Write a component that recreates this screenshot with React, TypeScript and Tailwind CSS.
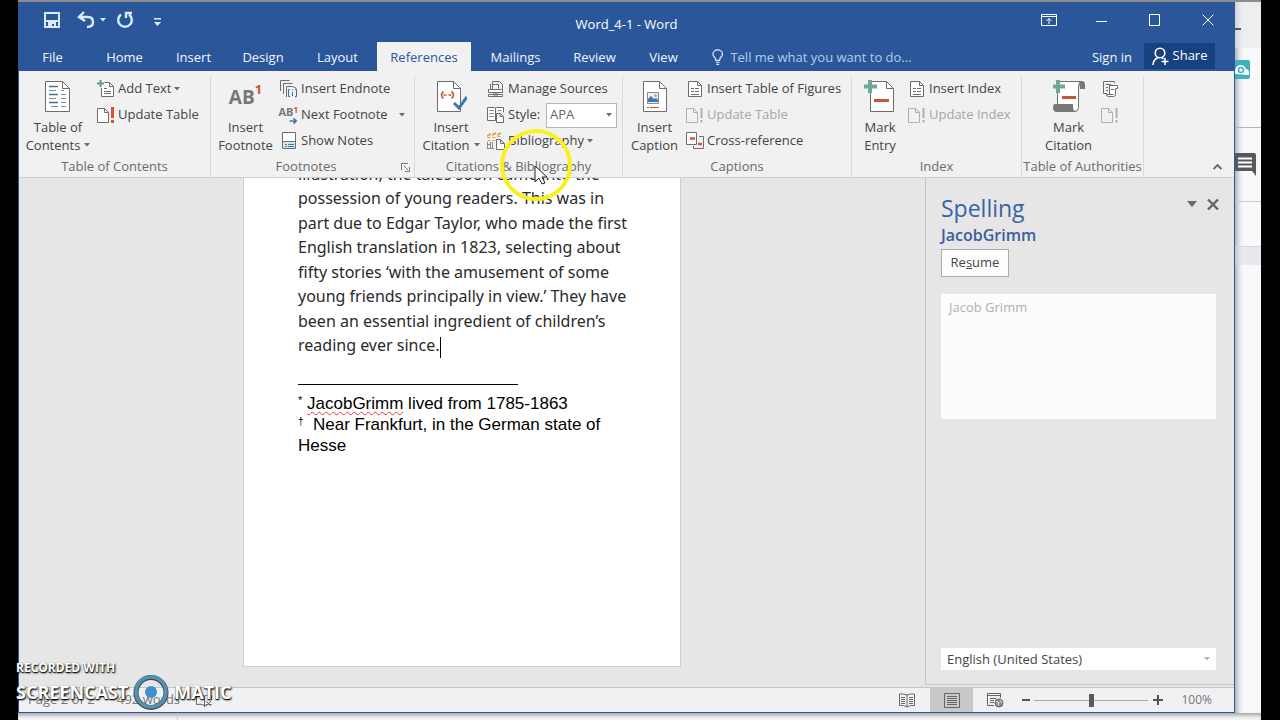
import type { ReactNode } from "react";

type IconProps = { children: ReactNode; big?: boolean };

function Icon({ children, big }: IconProps) {
  return big ? (
    <svg width="32" height="34" viewBox="0 0 32 34" fill="none" stroke="#6d6d6d" className="shrink-0">
      {children}
    </svg>
  ) : (
    <svg width="18" height="18" viewBox="0 0 18 18" fill="none" stroke="#6d6d6d" className="shrink-0">
      {children}
    </svg>
  );
}

function Caret({ className = "fill-[#6a6a6a]" }: { className?: string }) {
  return (
    <svg width="6" height="4" viewBox="0 0 6 4" className={`shrink-0 ${className}`}>
      <path d="M0 0h6L3 3.5z" />
    </svg>
  );
}

const tocIcon = (
  <Icon big>
    <path d="M3.5 1.5h17l7 7v23h-24z" fill="#fff" />
    <path d="M20.500 1.500v7h7" />
    <path d="M7 6.500h9M7 14.500h9M7 22.500h9" stroke="#41719c" strokeWidth="1.500" />
    <path d="M7 10.500h7M7 18.500h7M9 26.500h7M19 14.500h5M19 18.500h5M19 22.500h5M19 26.500h5M19 10.500h3" stroke="#8a8a8a" />
  </Icon>
);

const addTextIcon = (
  <Icon>
    <path d="M4.500 8v8.500h12v-10l-4-4h-5" fill="#fff" />
    <path d="M12.500 2.500v4h4M7 8.500h3M7 11.500h7M7 13.500h7" />
    <path d="M3.500 0v7M0 3.500h7" stroke="#58a283" strokeWidth="2" />
  </Icon>
);

const updateIcon = (
  <Icon>
    <path d="M.5 2.500h7l4 4v10H.5z" fill="#fff" />
    <path d="M7.500 2.500v4h4" />
    <path d="M15.500 1v11M15.500 14v3" stroke="#d9532f" strokeWidth="3" />
  </Icon>
);

const updateIconOff = (
  <Icon>
    <g stroke="#b0b0b0">
      <path d="M.5 2.500h7l4 4v10H.5z" />
      <path d="M7.500 2.500v4h4" />
      <path d="M15.500 2v10M15.500 14v2.500" strokeWidth="2" />
    </g>
  </Icon>
);

const endnoteIcon = (
  <Icon>
    <path d="M.5 11V.5h9M3.500 14V3.500h9M6.500 17V6.500h6l4 2" fill="none" />
    <path d="M10 9.500H8.500v7H10M15 9.500h1.500v7H15M12.500 12v4M12.500 9.500v1" stroke="#3d6f9e" />
  </Icon>
);

const showNotesIcon = (
  <Icon>
    <path d="M2.500.5h13v16h-13z" fill="#fff" />
    <path d="M3 9h12v7H3z" fill="#d3e4ec" stroke="none" />
    <path d="M2.500 9.500h13M5 12.500h2M8 12.500h6M5 14.500h2M8 14.500h6" stroke="#4f8099" />
  </Icon>
);

const citationIcon = (
  <Icon big>
    <path d="M2.500 1.500h16l7 7v23h-23z" fill="#fff" />
    <path d="M18.500 1.500v7h7" />
    <path d="M8.500 11.500q-4 3.500 0 7M16.500 11.500q4 3.500 0 7M8.500 15h3M13.500 15h3" stroke="#d0593a" strokeWidth="1.700" />
    <path d="M19 23l5 5 8-11" stroke="#3f77b5" strokeWidth="3" />
  </Icon>
);

const manageIcon = (
  <Icon>
    <path d="M5.500 9V1.500h7l3 3V9M3.500 9V4M5.500 4.500h6v4" />
    <path d="M1.500 9.500h14v3h-14zM1.500 14.500h14v2h-14z" fill="#fff" />
    <path d="M6 14.500h5" strokeWidth="2" />
  </Icon>
);

const styleIcon = (
  <Icon>
    <path d="M.5 1.500h7q1 0 1 1v12h-8zM8.500 2.500q0-1 1-1h7v5" fill="#fff" />
    <path d="M2 4.500h5M2 7.500h5M2 10.500h5M10.500 4.500h4" stroke="#6a9ab0" />
    <path d="M9.500 7.500h4l3 3v6h-7zM13 7.500v3h3" fill="#fff" />
  </Icon>
);

const bibliographyIcon = (
  <Icon>
    <path d="M0 3l4-2v2L0 5zM5 2l4-2v2L5 4zM10 2l4-2v2l-4 2z" fill="#e2a24b" stroke="none" />
    <path d="M.5 5.500h3M.5 8.500h3M5.500 5.500h3M5.500 8.500h3M10.500 4.500h3" stroke="#e2a24b" />
    <path d="M.5 10v6M3.500 10v6M5.500 10v6M0 12.500h4M0 16.500h7" stroke="#8a8a8a" />
    <path d="M9.500 7.500h4l4 4v6h-8zM13.500 7.500v4h4" fill="#fff" />
  </Icon>
);

const captionIcon = (
  <Icon big>
    <path d="M4.500 1.500h16l7 7v23h-23z" fill="#fff" />
    <path d="M20.500 1.500v7h7" />
    <path d="M8.500 12.500h11v11h-11z" fill="#eaf1f8" stroke="#8a8a8a" />
    <path d="M9 22v-3l3-3 3 3 2-1 2 2v2z" fill="#3f77b5" stroke="none" />
    <circle cx="16.500" cy="15.500" r="1.500" fill="#e2a24b" stroke="none" />
    <path d="M8 27.500h2M11 27.500h9" stroke="#c4553a" />
  </Icon>
);

const pageListIcon = (
  <Icon>
    <path d="M2.500 1.500h9l4 4v11h-13z" fill="#fff" />
    <path d="M11.500 1.500v4h4M5 8.500h3M9 8.500h4M5 11.500h3M9 11.500h4M5 14.500h8" />
  </Icon>
);

const crossRefIcon = (
  <Icon>
    <path d="M.5.5h10v12H.5z" fill="#fff" />
    <path d="M13 4.500h4.500v12h-10V14" />
    <path d="M4 6.500h5M12 12h4" stroke="#d0593a" strokeWidth="2.400" />
  </Icon>
);

const markEntryIcon = (
  <Icon big>
    <path d="M6.500 1.500h16l7 7v23h-23z" fill="#fff" />
    <path d="M22.500 1.500v7h7" />
    <path d="M10 20.500h15" stroke="#c2573b" strokeWidth="3" />
    <path d="M6 0v13M0 6.500h13" stroke="#6faa90" strokeWidth="4" />
  </Icon>
);

const markCitationIcon = (
  <Icon big>
    <path d="M4.500 25V1.500h24q-3 1-3 5v21q0 4-4 4H6" fill="#fff" />
    <path d="M26 1h3q3 0 3 4v4h-5zM2 24h18v3q0 4 4 5H4q-4 0-4-4 0-4 2-4z" fill="#777" stroke="none" />
    <path d="M9 17.500h14" stroke="#c2573b" strokeWidth="3" />
    <path d="M5 0v13M-1 6.500h13" stroke="#6faa90" strokeWidth="4" />
  </Icon>
);

const authoritiesIcon = (
  <Icon>
    <path d="M6 13.500H2.500v-12h11V3M5 4.500h5M5 7.500h2M5 10.500h2" />
    <path d="M8.500 14V5.500h8v3h-2v6q0 2-2 2h-5q-2 0-2-2h7" fill="#fff" />
    <path d="M10 9.500h3" />
  </Icon>
);

function BigButton({ icon, lines, width, caret }: { icon: ReactNode; lines: string[]; width: string; caret?: boolean }) {
  return (
    <button className={`flex flex-col items-center pt-[3px] ${width}`}>
      <span className="flex h-9 items-center">{icon}</span>
      <span className="mt-[3px] whitespace-nowrap leading-[18px]">{lines[0]}</span>
      <span className="flex items-center gap-1 whitespace-nowrap leading-[18px]">
        {lines[1]}
        {caret && <Caret />}
      </span>
    </button>
  );
}

function SmallButton({ icon, label, caret, disabled, split }: { icon: ReactNode; label?: string; caret?: boolean; disabled?: boolean; split?: boolean }) {
  return (
    <button
      disabled={disabled}
      className="flex h-[26px] items-center gap-[3px] whitespace-nowrap disabled:text-[#a6a6a6]"
      aria-label={label ? undefined : "Table of Authorities"}
    >
      {icon}
      {label && <span>{label}</span>}
      {caret && <Caret className={split ? "fill-[#6a6a6a] ml-2" : "fill-[#6a6a6a]"} />}
    </button>
  );
}

function Group({ title, width, children, launcher }: { title: string; width: string; children: ReactNode; launcher?: boolean }) {
  return (
    <section className={`flex shrink-0 flex-col ${width}`}>
      <div className="mt-[5px] flex flex-1 border-r border-[#dadada]">{children}</div>
      <div className="flex h-5 items-center justify-center border-r border-[#dadada] text-[#6b6b6b]">
        <span className={launcher ? "flex-1 text-center" : "whitespace-nowrap"}>{title}</span>
        {launcher && (
          <button aria-label="Footnote options" className="mr-1">
            <svg width="9" height="9" viewBox="0 0 9 9" fill="none" stroke="#777">
              <path d="M.5 7V.5H7M3 3l4 4M8.500 4v4.500H4" />
            </svg>
          </button>
        )}
      </div>
    </section>
  );
}

const tabs = [
  { name: "File", width: "w-[67px]" },
  { name: "Home", width: "w-[77px]" },
  { name: "Insert", width: "w-[61px]" },
  { name: "Design", width: "w-[78px]" },
  { name: "Layout", width: "w-[71px]" },
  { name: "References", width: "w-[102px]" },
  { name: "Mailings", width: "w-[81px]" },
  { name: "Review", width: "w-[77px]" },
  { name: "View", width: "w-[61px]" },
];

function TitleBar() {
  return (
    <header className="grid h-10 grid-cols-[1fr_auto_1fr] items-center text-white">
      <div className="flex items-center pb-1 pl-6">
        <button aria-label="Save">
          <svg width="18" height="18" viewBox="0 0 18 18" fill="none" stroke="#dcebfb" strokeWidth="2">
            <path d="M2 2h14v14H2zM3 10h12M6 16v-4h6v4" />
            <path d="M8 13v3" />
          </svg>
        </button>
        <button aria-label="Undo" className="ml-4">
          <svg width="18" height="18" viewBox="0 0 18 18" fill="none" stroke="#dcebfb" strokeWidth="2.400">
            <path d="M7 1L2 6l6 4M2.500 6H11q5 0 5 5t-6 5" />
          </svg>
        </button>
        <button aria-label="Undo history" className="ml-[5px]">
          <Caret className="fill-[#dcebfb]" />
        </button>
        <button aria-label="Repeat" className="ml-[10px]">
          <svg width="18" height="18" viewBox="0 0 18 18" fill="none" stroke="#dcebfb" strokeWidth="2.400">
            <path d="M5 3.500a6.800 6.800 0 1 0 8 0M10 7V2h6" />
          </svg>
        </button>
        <button aria-label="Customize toolbar" className="ml-5 pt-1">
          <svg width="7" height="8" viewBox="0 0 7 8" fill="#dcebfb">
            <path d="M0 0h7v1.500H0zM0 4h7L3.500 8z" />
          </svg>
        </button>
      </div>
      <h1 className="pt-[6px]">Word_4-1 - Word</h1>
      <div className="flex h-full justify-end pb-1">
        <button aria-label="Ribbon display options" className="flex w-[53px] items-center justify-center">
          <svg width="16" height="14" viewBox="0 0 16 14" fill="none" stroke="#fff">
            <path d="M.5 1.500h15v11H.5zM1 3.500h14M8 11V5.500M5.500 8L8 5.500 10.500 8" />
          </svg>
        </button>
        <button aria-label="Minimize" className="flex w-[53px] items-center justify-center">
          <svg width="11" height="11" stroke="#fff"><path d="M0 6.500h11" /></svg>
        </button>
        <button aria-label="Maximize" className="flex w-[53px] items-center justify-center">
          <svg width="11" height="12" fill="none" stroke="#fff"><path d="M.5.5h10v11H.5z" /></svg>
        </button>
        <button aria-label="Close" className="flex w-[53px] items-center justify-center">
          <svg width="12" height="12" stroke="#fff"><path d="M.5.5l11 11M11.500.5l-11 11" /></svg>
        </button>
      </div>
    </header>
  );
}

function TabBar() {
  return (
    <nav className="flex h-[29px] items-stretch text-[#f0f5fc]">
      {tabs.map((tab) => (
        <button
          key={tab.name}
          className={`shrink-0 ${tab.width} ${tab.name === "References" ? "px-[4px]" : "pt-[2px]"}`}
        >
          {tab.name === "References" ? (
            <span className="block bg-[#f1f1f1] pt-px leading-7 text-[#2b579a]">{tab.name}</span>
          ) : (
            tab.name
          )}
        </button>
      ))}
      <label className="ml-[18px] flex flex-1 items-center gap-[7px] pt-[2px]">
        <svg width="12" height="17" viewBox="0 0 12 17" fill="none" stroke="#dcebfb" strokeWidth="1.300">
          <path d="M4 11.500Q4 9.500 2.500 8 1 6.500 1 5a5 4.400 0 0 1 10 0q0 1.500-1.500 3T8 11.500zM4 13.500h4M4.500 15.700h3" />
        </svg>
        <input
          placeholder="Tell me what you want to do..."
          className="w-full bg-transparent outline-none placeholder:text-[#b5cbeb]"
        />
      </label>
      <button className="px-3 pt-[2px]">Sign in</button>
      <button className="mb-[2px] mr-[19px] mt-px flex w-[71px] items-center justify-center gap-[4px] bg-[#17427f] text-white">
        <svg width="17" height="19" viewBox="0 0 17 19" fill="none" stroke="#fff" strokeWidth="1.600">
          <circle cx="8" cy="6" r="4.800" />
          <path d="M1 18q0-5 5-7.500M10 10.500l1.500 1.500M13 11v7M9.500 14.500h7" />
        </svg>
        Share
      </button>
    </nav>
  );
}

function Ribbon() {
  return (
    <div className="flex h-[107px] border-b border-[#d0d0d0] bg-[#f1f1f1] text-[#444]">
      <Group title="Table of Contents" width="w-[192px]">
        <BigButton icon={tocIcon} lines={["Table of", "Contents"]} width="w-[78px]" caret />
        <div>
          <SmallButton icon={addTextIcon} label="Add Text" caret />
          <SmallButton icon={updateIcon} label="Update Table" />
        </div>
      </Group>
      <Group title="Footnotes" width="w-[204px]" launcher>
        <BigButton
          icon={
            <span className="flex items-start text-[19px] font-bold leading-10 text-[#777]">
              AB<sup className="top-0 text-[13px] leading-6 text-[#d9532f]">1</sup>
            </span>
          }
          lines={["Insert", "Footnote"]}
          width="w-[69px]"
        />
        <div>
          <SmallButton icon={endnoteIcon} label="Insert Endnote" />
          <SmallButton
            icon={
              <span className="flex h-[18px] w-[18px] flex-col items-end">
                <span className="flex items-start text-[11px] font-bold leading-3 text-[#777]">
                  AB<sup className="top-0 text-[8px] leading-[8px] text-[#d9532f]">1</sup>
                </span>
                <svg width="9" height="7" viewBox="0 0 9 7" fill="none" stroke="#3f77b5" strokeWidth="2">
                  <path d="M0 3.500h7M4.500.5l3 3-3 3" />
                </svg>
              </span>
            }
            label="Next Footnote"
            caret
            split
          />
          <SmallButton icon={showNotesIcon} label="Show Notes" />
        </div>
      </Group>
      <Group title="Citations & Bibliography" width="w-[208px]">
        <BigButton icon={citationIcon} lines={["Insert", "Citation"]} width="w-[72px]" caret />
        <div>
          <SmallButton icon={manageIcon} label="Manage Sources" />
          <label className="flex h-[26px] items-center gap-[3px]">
            {styleIcon}
            <span className="w-[35px]">Style:</span>
            <span className="relative flex items-center">
              <select className="h-[25px] w-[71px] appearance-none border border-[#b5b5b5] bg-white px-[3px] text-[#666]">
                <option>APA</option>
              </select>
              <Caret className="pointer-events-none absolute right-[5px] fill-[#6a6a6a]" />
            </span>
          </label>
          <SmallButton icon={bibliographyIcon} label="Bibliography" caret />
        </div>
      </Group>
      <Group title="Captions" width="w-[229px]">
        <BigButton icon={captionIcon} lines={["Insert", "Caption"]} width="w-[63px]" />
        <div>
          <SmallButton icon={pageListIcon} label="Insert Table of Figures" />
          <SmallButton icon={updateIconOff} label="Update Table" disabled />
          <SmallButton icon={crossRefIcon} label="Cross-reference" />
        </div>
      </Group>
      <Group title="Index" width="w-[170px]">
        <BigButton icon={markEntryIcon} lines={["Mark", "Entry"]} width="w-[56px]" />
        <div>
          <SmallButton icon={pageListIcon} label="Insert Index" />
          <SmallButton icon={updateIconOff} label="Update Index" disabled />
        </div>
      </Group>
      <Group title="Table of Authorities" width="w-[122px]">
        <div className="flex pl-[14px]">
          <BigButton icon={markCitationIcon} lines={["Mark", "Citation"]} width="w-[65px]" />
          <div>
            <SmallButton icon={authoritiesIcon} />
            <SmallButton icon={updateIconOff} disabled />
          </div>
        </div>
      </Group>
      <button aria-label="Collapse the ribbon" className="ml-auto mr-3 self-end pb-[7px]">
        <svg width="9" height="6" viewBox="0 0 9 6" fill="none" stroke="#666" strokeWidth="1.800">
          <path d="M.5 5l4-4 4 4" />
        </svg>
      </button>
    </div>
  );
}

const bodyLines = [
  "illustration, the tales soon came into the",
  "possession of young readers. This was in",
  "part due to Edgar Taylor, who made the first",
  "English translation in 1823, selecting about",
  "fifty stories ‘with the amusement of some",
  "young friends principally in view.’ They have",
  "been an essential ingredient of children’s",
  "reading ever since.",
];

function Document() {
  return (
    <main className="flex flex-1 justify-center overflow-hidden pb-5 pr-5">
      <article className="w-[438px] border border-t-0 border-[#d0d0d0] bg-white pl-[54px] text-black">
        <div className="-mt-4 grid h-[196px] whitespace-nowrap font-['Noto_Sans'] text-[16px] leading-6 text-[#2a2a2a]">
          {bodyLines.map((line, i) => (
            <p key={line}>
              {line}
              {i === bodyLines.length - 1 && (
                <span className="ml-px inline-block h-[21px] w-px bg-black align-middle" />
              )}
            </p>
          ))}
        </div>
        <hr className="mt-[26px] w-[220px] border-black" />
        <div className="mt-2 font-['Liberation_Sans'] text-[17px] leading-[21px]">
          <p>
            <sup className="text-[11px]">*</sup>{" "}
            <span className="underline decoration-[#e03c3c] decoration-wavy decoration-1 underline-offset-2">JacobGrimm</span> lived from 1785-1863
          </p>
          <p>
            <sup className="text-[10px]">†</sup>&nbsp; Near Frankfurt, in the German state of
          </p>
          <p>Hesse</p>
        </div>
      </article>
    </main>
  );
}

function SpellingPane() {
  return (
    <aside className="mb-[2px] flex w-[309px] flex-col border-b border-l border-[#c6c6c6] pb-[14px] pl-[15px] pr-[18px]">
      <div className="-mr-[3px] mt-[14px] flex h-8 items-center">
        <h2 className="flex-1 text-[23px] text-[#3a63a5]">Spelling</h2>
        <button aria-label="Pane options" className="mb-2">
          <svg width="10" height="6" fill="#6a6a6a"><path d="M0 0h10L5 6z" /></svg>
        </button>
        <button aria-label="Close pane" className="mb-2 ml-[10px]">
          <svg width="12" height="11" stroke="#666" strokeWidth="2.400"><path d="M1 .5l10 10M11 .5l-10 10" /></svg>
        </button>
      </div>
      <p className="h-[25px] text-[16px] font-semibold leading-[22px] text-[#3a5f9e]">JacobGrimm</p>
      <button className="h-[28px] w-[68px] border border-[#ababab] bg-[#fdfdfd] text-[#444]">
        Re<u>s</u>ume
      </button>
      <textarea
        aria-label="Suggestions"
        readOnly
        value="Jacob Grimm"
        className="mt-[17px] h-[125px] w-full resize-none bg-[#fcfcfc] px-2 py-1 text-[#b0b0b0] outline-none"
      />
      <label className="relative mt-auto flex items-center">
        <span className="sr-only">Dictionary language</span>
        <select className="h-[22px] w-full appearance-none bg-white px-[6px] leading-[22px] text-[#444]">
          <option>English (United States)</option>
        </select>
        <Caret className="pointer-events-none absolute right-[6px] fill-[#b5b5b5]" />
      </label>
    </aside>
  );
}

function StatusBar() {
  return (
    <footer className="flex h-[25px] items-center border-t border-[#c6c6c6] bg-[#f0f1f3] text-[#777]">
      <span className="ml-[9px] w-[89px]">Page 2 of 2</span>
      <span className="w-[79px]">492 words</span>
      <svg width="17" height="15" viewBox="0 0 17 15" fill="none" stroke="#666">
        <path d="M8.500 14V3Q5 1 .5 2.500v9q5-1 8 1 3-2 7-1M8.500 3Q12 1 15.500 2.500V7M10 8l5 5M15 8l-5 5" />
      </svg>
      <div className="ml-auto flex h-full items-center">
        <button aria-label="Read mode" className="px-[15px]">
          <svg width="16" height="15" viewBox="0 0 16 15" fill="none" stroke="#666">
            <path d="M8 14V2Q5 .5.500 1v11.500Q5 12 8 14q3-2 7.500-1.500V1Q11 .5 8 2M2 4.500h4M2 6.500h4M2 8.500h4M2 10.500h4M10 4.500h4M10 6.500h4M10 8.500h4M10 10.500h4" />
          </svg>
        </button>
        <button aria-label="Print layout" className="flex h-full w-[43px] items-center justify-center bg-[#c9c9c9]">
          <svg width="16" height="15" viewBox="0 0 16 15" fill="none" stroke="#666">
            <path d="M.5.5h15v14H.5zM3 3.500h10M3 5.500h10M3 7.500h10M3 9.500h10M3 11.500h10" />
          </svg>
        </button>
        <button aria-label="Web layout" className="ml-[14px]">
          <svg width="17" height="16" viewBox="0 0 17 16" fill="none" stroke="#666">
            <path d="M7 13.500H.5V1.500h13V6M.5 3.500h13M3 6.500h6M3 8.500h4M3 10.500h4" />
            <circle cx="12" cy="11" r="4" fill="#888" />
            <path d="M9 9.500l3 1-1 3M13 8l2 3" stroke="#f0f1f3" />
          </svg>
        </button>
        <button aria-label="Zoom out" className="ml-[18px]">
          <svg width="8" height="10" stroke="#555" strokeWidth="2"><path d="M0 5h8" /></svg>
        </button>
        <input
          type="range"
          aria-label="Zoom"
          defaultValue="50"
          className="mx-[4px] h-[14px] w-[114px] appearance-none bg-transparent [&::-webkit-slider-runnable-track]:h-px [&::-webkit-slider-runnable-track]:bg-[#a8a8a8] [&::-webkit-slider-thumb]:-mt-[6px] [&::-webkit-slider-thumb]:h-[13px] [&::-webkit-slider-thumb]:w-[5px] [&::-webkit-slider-thumb]:appearance-none [&::-webkit-slider-thumb]:bg-[#5a5a5a]"
        />
        <button aria-label="Zoom in" className="ml-px">
          <svg width="10" height="10" stroke="#555" strokeWidth="2"><path d="M0 5h10M5 0v10" /></svg>
        </button>
        <span className="ml-[18px] mr-[22px] text-[12px]">100%</span>
      </div>
    </footer>
  );
}

// Sliver of the browser window that shows to the right of Word
function BackgroundWindow() {
  return (
    <div className="flex w-[26px] shrink-0 flex-col bg-[#f9f9fb] shadow-[inset_7px_0_6px_-5px_#9a9aa4]">
      <div className="h-[46px] bg-[#e4e6ea]/60 pt-[26px]">
        <div className="h-[2px] w-[6px] bg-[#555]" />
      </div>
      <div className="h-[80px] border-b border-[#b5b5b5] pt-[12px]">
        <svg width="16" height="19" viewBox="0 0 16 19">
          <path d="M0 0h13q2 0 2 2v15q0 2-2 2H0z" fill="#3fb0c0" />
          <path d="M0 14q-1-7 5-9 5 0 6 4 4 1 3 6z" fill="#fff" />
          <circle cx="6" cy="10" r="2.500" fill="none" stroke="#3fb0c0" strokeWidth="1.500" />
        </svg>
      </div>
      <div className="h-[74px] border-b border-[#ccc] pt-[25px]">
        <svg width="22" height="23" viewBox="0 0 22 23">
          <path d="M0 0h19q2 0 2 2v21l-4-5H0z" fill="#58585c" />
          <path d="M3 5.500h14M3 9.500h14M3 13.500h14" stroke="#fff" strokeWidth="2" />
        </svg>
      </div>
      <div className="h-[45px] border-b border-[#d5d5d9]" />
      <div className="h-[18px] bg-[#d9d9e0]/50" />
    </div>
  );
}

function Watermark() {
  return (
    <div className="absolute bottom-[10px] left-4 font-['Open_Sans'] font-bold text-white [text-shadow:1px_1px_2px_#000,0_1px_1px_#333]">
      <p className="text-[12px] leading-3">RECORDED WITH</p>
      <div className="flex items-center gap-[5px] text-[18px] leading-9">
        <span>SCREENCAST</span>
        <svg width="36" height="36" viewBox="0 0 36 36" fill="none">
          <circle cx="18" cy="18.500" r="15" stroke="#444" strokeWidth="5" />
          <circle cx="18" cy="18" r="15" stroke="#4e93b8" strokeWidth="3.500" />
          <circle cx="18" cy="18" r="6" fill="#3f8fd0" />
        </svg>
        <span>MATIC</span>
      </div>
    </div>
  );
}

function Pointer() {
  return (
    <svg width="72" height="72" viewBox="0 0 72 72" fill="none" className="pointer-events-none absolute left-[500px] top-[129px]">
      <circle cx="36" cy="36" r="34" stroke="#f8f11a" strokeWidth="4" />
      <path d="M35 37v16l4-4 3 6 3-1-3-6h5z" fill="#fff" stroke="#222" />
    </svg>
  );
}

export default function App() {
  return (
    <div className="relative flex min-h-screen bg-black pl-[18px] pr-[19px] font-['Open_Sans',sans-serif] text-[13px]">
      <div className="flex flex-1 flex-col border-t-2 border-[#8c8c8c] bg-[#f5f5f5]">
        <div className="flex flex-1">
          <div className="flex min-w-0 flex-1 flex-col border-x border-b border-[#2b579a] bg-[#e6e6e6]">
            <div className="bg-[#2b579a]">
              <TitleBar />
              <TabBar />
            </div>
            <Ribbon />
            <div className="flex flex-1">
              <Document />
              <SpellingPane />
            </div>
            <StatusBar />
          </div>
          <BackgroundWindow />
        </div>
        <div className="h-[7px] shadow-[inset_0_4px_4px_-2px_#9a9aa4]">
          <div className="h-full w-[160px] border-r border-[#ccc]" />
        </div>
      </div>
      <Watermark />
      <Pointer />
    </div>
  );
}
